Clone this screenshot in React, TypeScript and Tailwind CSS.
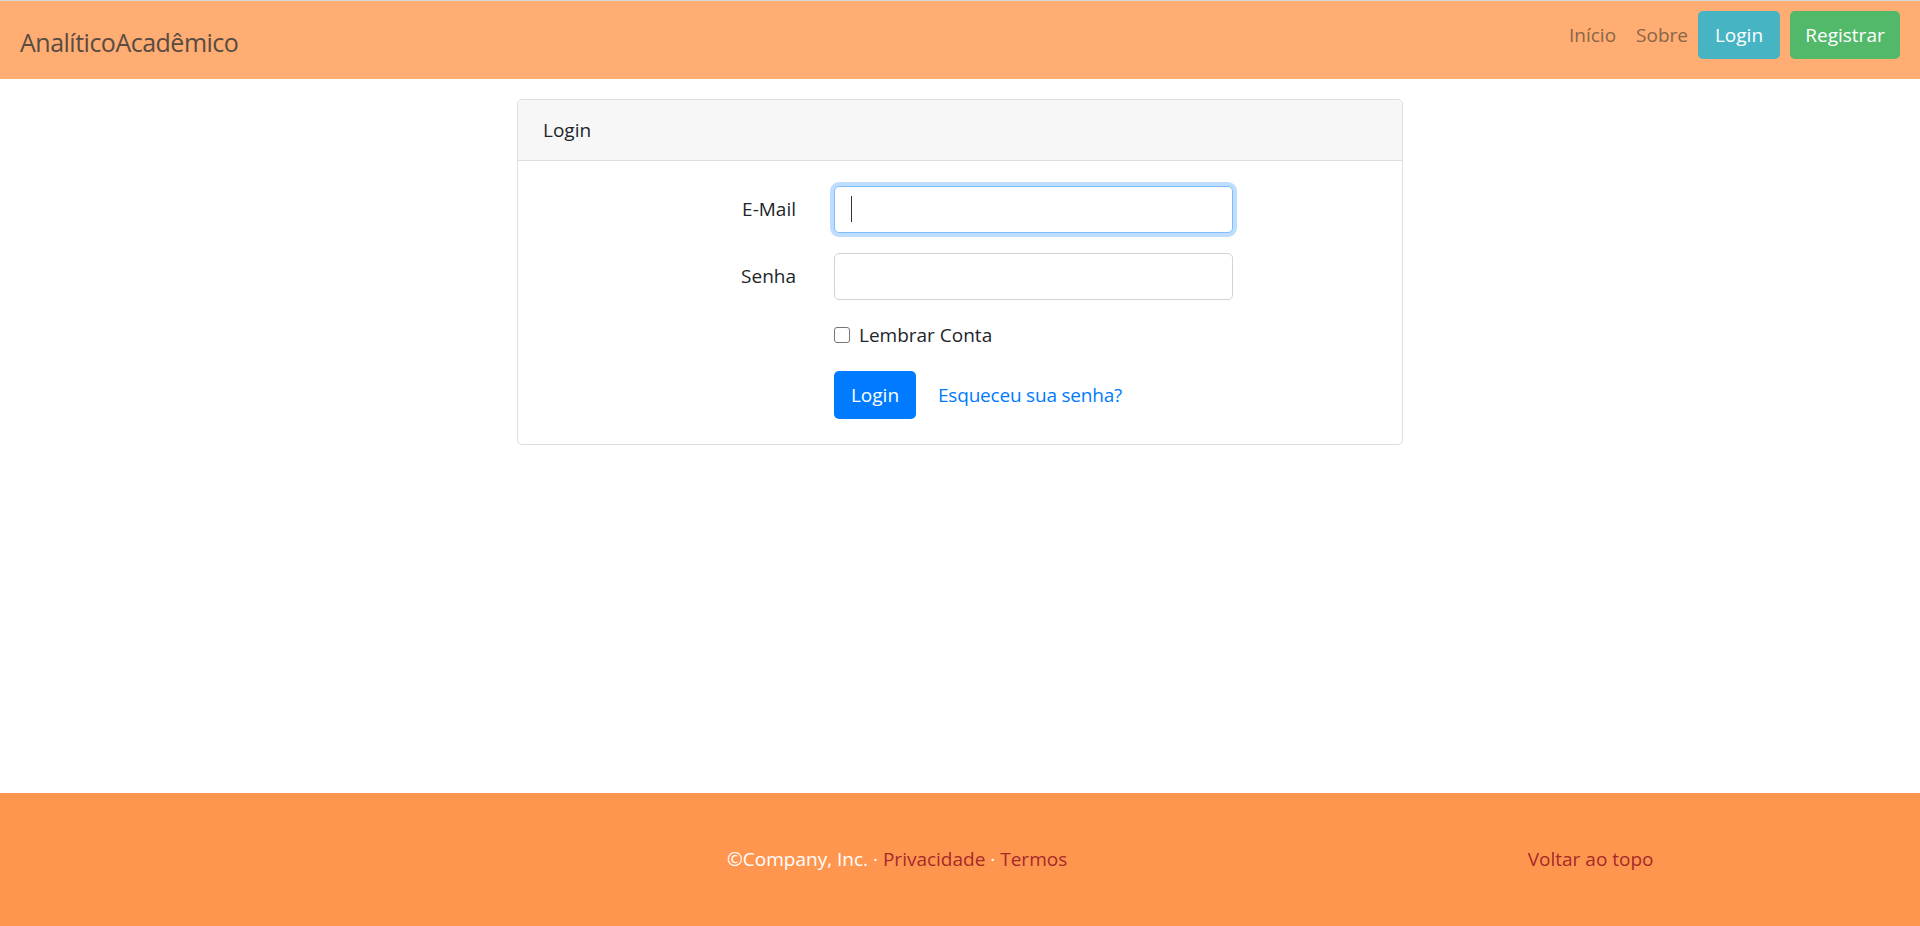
import React from 'react';

const font = { fontFamily: '"Open Sans", "Noto Sans", Arial, sans-serif' };

const Navbar: React.FC = () => {
  return (
    <header className="h-[79px] border-t border-[#d9d9d9] bg-[#ffad72] flex items-start justify-between px-[20px]">
      <a href="#" className="mt-[23px] text-[25px] leading-[37px] text-[#574b43] tracking-[-0.5px]">
        AnalíticoAcadêmico
      </a>
      <nav className="mt-[10px] flex items-center">
        <a href="#" className="px-[10px] text-[19px] leading-[48px] text-[#8a6548]">Início</a>
        <a href="#" className="px-[10px] text-[19px] leading-[48px] text-[#8a6548]">Sobre</a>
        <a href="#" className="h-[48px] w-[82px] flex items-center justify-center rounded-[5px] bg-[#47b4c4] text-[19px] text-white">
          Login
        </a>
        <a href="#" className="ml-[10px] h-[48px] w-[110px] flex items-center justify-center rounded-[5px] bg-[#52b86a] text-[19px] text-white">
          Registrar
        </a>
      </nav>
    </header>
  );
};

const FormRow: React.FC<{ label: string; focused?: boolean; type?: string }> = ({ label, focused, type = 'text' }) => {
  return (
    <div className="flex items-center gap-[38px]">
      <label className="w-[253px] text-right text-[19px] text-[#212529]">{label}</label>
      <div className="relative w-[399px]">
        <input
          type={type}
          className={
            focused
              ? 'w-full h-[47px] rounded-[5px] border border-[#80bdff] bg-white px-[15px] outline-none ring-4 ring-[#007bff]/25'
              : 'w-full h-[47px] rounded-[5px] border border-[#ced4da] bg-white px-[15px] outline-none'
          }
        />
        {focused && <span className="absolute left-[17px] top-[10px] h-[26px] w-px bg-[#333]" />}
      </div>
    </div>
  );
};

const LoginCard: React.FC = () => {
  return (
    <div className="w-[886px] rounded-[5px] border border-[#dfdfdf] bg-white">
      <div className="h-[61px] border-b border-[#dfdfdf] bg-[#f7f7f7] px-[25px] flex items-center rounded-t-[5px]">
        <span className="text-[19px] text-[#212529]">Login</span>
      </div>
      <div className="p-[25px] flex flex-col">
        <FormRow label="E-Mail" focused />
        <div className="mt-[20px]">
          <FormRow label="Senha" type="password" />
        </div>
        <div className="mt-[20px] ml-[291px] h-[30px] flex items-center">
          <input
            type="checkbox"
            className="appearance-none w-[16px] h-[16px] rounded-[3px] border border-[#767676] bg-white"
          />
          <span className="ml-[9px] text-[19px] text-[#212529]">Lembrar Conta</span>
        </div>
        <div className="mt-[21px] ml-[291px] flex items-center">
          <button className="h-[48px] w-[82px] rounded-[5px] bg-[#007bff] text-[19px] text-white">Login</button>
          <a href="#" className="ml-[22px] text-[19px] tracking-[-0.2px] text-[#007bff]">Esqueceu sua senha?</a>
        </div>
      </div>
    </div>
  );
};

const Footer: React.FC = () => {
  return (
    <footer className="h-[133px] bg-[#ff9650] flex items-center">
      <div className="mx-auto w-[1425px] px-[19px] flex items-center">
        <p className="flex-1 text-center text-[19px] text-white">
          ©Company, Inc. · <a href="#" className="text-[#a52a2a]">Privacidade</a> ·{' '}
          <a href="#" className="text-[#a52a2a]">Termos</a>
        </p>
        <a href="#" className="text-[19px] text-[#a52a2a]">Voltar ao topo</a>
      </div>
    </footer>
  );
};

export default function App() {
  return (
    <div className="min-h-screen flex flex-col bg-white" style={font}>
      <Navbar />
      <main className="flex-1 flex justify-center pt-[20px]">
        <div>
          <LoginCard />
        </div>
      </main>
      <Footer />
    </div>
  );
}
